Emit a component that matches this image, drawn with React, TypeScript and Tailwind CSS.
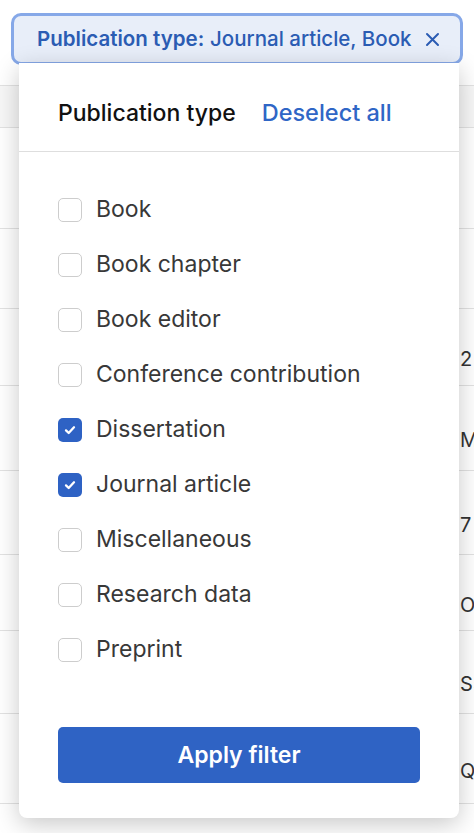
import { useState } from 'react'

const types = [
  'Book',
  'Book chapter',
  'Book editor',
  'Conference contribution',
  'Dissertation',
  'Journal article',
  'Miscellaneous',
  'Research data',
  'Preprint',
]

// rows of the results table that sits behind the dropdown
const rows = [
  { h: 'h-[42px]', text: '' },
  { h: 'h-[101px]', text: '' },
  { h: 'h-[80px]', text: '' },
  { h: 'h-[77px]', text: '2' },
  { h: 'h-[85px]', text: 'M' },
  { h: 'h-[84px]', text: '7' },
  { h: 'h-[76px]', text: 'ON' },
  { h: 'h-[83px]', text: 'S5' },
  { h: 'h-[90px]', text: 'Q' },
]

function Checkbox({ checked }: { checked: boolean }) {
  return checked ? (
    <span className="flex h-[24px] w-[24px] shrink-0 items-center justify-center rounded-[5px] bg-[#2e62c4]">
      <svg width="14" height="14" viewBox="0 0 14 14" fill="none">
        <path d="M3 7.4 5.7 10 11 4.3" stroke="#fff" strokeWidth="2.3" strokeLinecap="round" strokeLinejoin="round" />
      </svg>
    </span>
  ) : (
    <span className="h-[24px] w-[24px] shrink-0 rounded-[5px] border-[1.5px] border-[#cdcdcd] bg-white" />
  )
}

export default function App() {
  const [selected, setSelected] = useState<string[]>(['Dissertation', 'Journal article'])

  function toggle(t: string) {
    setSelected(s => (s.includes(t) ? s.filter(x => x !== t) : [...s, t]))
  }

  return (
    <div className="relative h-[833px] w-[474px] overflow-hidden bg-white font-['Inter',sans-serif]">
      <div className="px-[11px] pt-[13px]">
        <button className="flex h-[52px] w-[452px] items-center justify-between rounded-[10px] border-[3px] border-[#86a8e8] bg-[#e8eef9] pl-[23px] pr-[20px] text-[20.5px] text-[#2b5cb3]">
          <span>
            <span className="font-semibold">Publication type:</span>{' '}
            <span className="font-medium">Journal article, Book</span>
          </span>
          <svg width="15" height="15" viewBox="0 0 15 15" fill="none">
            <path d="M2 2 13 13M13 2 2 13" stroke="#2b5cb3" strokeWidth="2" strokeLinecap="round" />
          </svg>
        </button>
      </div>

      <div className="mt-[20px] border-t border-[#e2e2e2]">
        {rows.map((r, i) => (
          <div key={i} className={`flex border-b border-[#e2e2e2] ${r.h} ${i === 0 ? 'bg-[#f7f7f7]' : ''}`}>
            <div className="w-[19px] shrink-0" />
            <div className="w-[101px] shrink-0 border-l border-[#e2e2e2]" />
            <div className="w-[339px] shrink-0 border-l border-[#e2e2e2]" />
            <div className="flex min-w-0 flex-1 items-center whitespace-nowrap pl-[1px] pt-[24px] text-[20px] text-[#333]">{r.text}</div>
          </div>
        ))}
      </div>

      <div className="absolute left-[19px] top-[63px] z-10 w-[440px] rounded-b-[8px] bg-white shadow-[0_6px_24px_rgba(0,0,0,0.22)]">
        <div className="flex h-[89px] items-center gap-[26px] border-b border-[#dedede] px-[39px] pt-[12px]">
          <span className="text-[23px] font-medium text-[#111]">Publication type</span>
          <button className="text-[23.5px] font-medium text-[#2f66c6]" onClick={() => setSelected([])}>
            Deselect all
          </button>
        </div>

        <div className="flex flex-col px-[39px] pt-[30px]">
          {types.map(t => (
            <label key={t} className="flex h-[55px] cursor-pointer items-center gap-[14px]" onClick={() => toggle(t)}>
              <Checkbox checked={selected.includes(t)} />
              <span className="text-[23px] text-[#383838]">{t}</span>
            </label>
          ))}
        </div>

        <div className="px-[39px] pb-[35px] pt-[50px]">
          <button className="flex h-[56px] w-full items-center justify-center rounded-[5px] bg-[#2f63c4] text-[23px] font-semibold text-white">
            Apply filter
          </button>
        </div>
      </div>
    </div>
  )
}
